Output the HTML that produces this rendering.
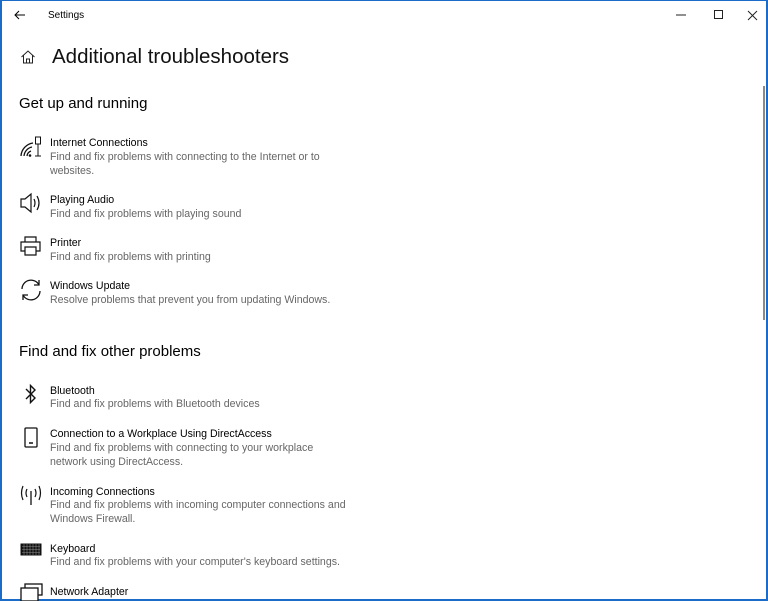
<!DOCTYPE html>
<html><head><style>
*{margin:0;padding:0;box-sizing:border-box}
body{width:768px;height:601px;overflow:hidden;background:#fff;font-family:"Liberation Sans",sans-serif;position:relative}
.frame{position:absolute;inset:0;border:2px solid #1b6cc8;border-top-width:1px}
.t{position:absolute;white-space:nowrap;color:#000}
.d{position:absolute;color:#666;font-size:10.6px;line-height:14px}
.h{font-size:10.6px}
svg{position:absolute}
</style></head><body>
<div class="frame"></div>
<svg style="left:14px;top:10px" width="12" height="10" viewBox="0 0 12 10"><path d="M11 5H1M5 1L1 5L5 9" stroke="#000" fill="none"/></svg>
<div class="t" style="left:48px;top:10px;font-size:10px">Settings</div>
<svg style="left:663px;top:9px" width="100" height="12"><path d="M13 6H23" stroke="#222"/><rect x="51.5" y="1.5" width="8" height="8" stroke="#222" fill="none"/><path d="M85 2L94 11M94 2L85 11" stroke="#222"/></svg>
<div style="position:absolute;left:763px;top:86px;width:2px;height:234px;background:#8a8a8a"></div>
<svg style="left:20px;top:49px" width="16" height="16" viewBox="0 0 16 16"><path d="M1.5 8L8 2L14.5 8M3.5 6.5V14H12.5V6.5M6.5 14V10H9.5V14" stroke="#222" fill="none"/></svg>
<div class="t" style="left:52px;top:45px;font-size:20.5px;color:#111">Additional troubleshooters</div>
<div class="t" style="left:19px;top:95px;font-size:15px">Get up and running</div>

<svg style="left:19px;top:136px" width="24" height="22" viewBox="0 0 24 22"><path d="M2 20A14 14 0 0 1 14 7M5 20A10 10 0 0 1 13 11M8 20A6 6 0 0 1 12 15" stroke="#111" fill="none" stroke-width="1.3"/><circle cx="11" cy="19.5" r="1.3" fill="#111"/><rect x="16.5" y="1" width="5" height="7" stroke="#111" fill="none"/><path d="M19 8V20M16 20H22" stroke="#111"/></svg>
<div class="t h" style="left:50px;top:137px">Internet Connections</div>
<div class="d" style="left:50px;top:150px">Find and fix problems with connecting to the Internet or to<br>websites.</div>

<svg style="left:19px;top:192px" width="24" height="22" viewBox="0 0 24 22"><path d="M2 7H6L12 2V20L6 15H2Z" stroke="#111" fill="none" stroke-width="1.2"/><path d="M15 7Q17 11 15 15M18 4Q22 11 18 18" stroke="#111" fill="none" stroke-width="1.2"/></svg>
<div class="t h" style="left:50px;top:194px">Playing Audio</div>
<div class="d" style="left:50px;top:207px">Find and fix problems with playing sound</div>

<svg style="left:19px;top:235px" width="24" height="22" viewBox="0 0 24 22"><path d="M6 7V2H17V7M6 16H2V7H21V16H17M6 12H17V20H6Z" stroke="#111" fill="none" stroke-width="1.2"/></svg>
<div class="t h" style="left:50px;top:237px">Printer</div>
<div class="d" style="left:50px;top:250px">Find and fix problems with printing</div>

<svg style="left:19px;top:278px" width="24" height="24" viewBox="0 0 24 24"><path d="M3 11A9 9 0 0 1 20 7M21 13A9 9 0 0 1 4 17" stroke="#111" fill="none" stroke-width="1.3"/><path d="M20 2V7H15M4 22V17H9" stroke="#111" fill="none" stroke-width="1.3"/></svg>
<div class="t h" style="left:50px;top:280px">Windows Update</div>
<div class="d" style="left:50px;top:293px">Resolve problems that prevent you from updating Windows.</div>

<div class="t" style="left:19px;top:343px;font-size:15px">Find and fix other problems</div>

<svg style="left:23px;top:383px" width="16" height="22" viewBox="0 0 16 22"><path d="M3 6L12 15L7.5 19.5V2.5L12 7L3 16" stroke="#111" fill="none" stroke-width="1.4"/></svg>
<div class="t h" style="left:50px;top:385px">Bluetooth</div>
<div class="d" style="left:50px;top:397px">Find and fix problems with Bluetooth devices</div>

<svg style="left:24px;top:427px" width="14" height="22" viewBox="0 0 14 22"><rect x="1" y="1" width="12" height="19" rx="1" stroke="#111" fill="none" stroke-width="1.3"/><path d="M5 16H9" stroke="#111" stroke-width="1.5"/></svg>
<div class="t h" style="left:50px;top:428px">Connection to a Workplace Using DirectAccess</div>
<div class="d" style="left:50px;top:441px">Find and fix problems with connecting to your workplace<br>network using DirectAccess.</div>

<svg style="left:19px;top:484px" width="24" height="22" viewBox="0 0 24 22"><path d="M12 7V21" stroke="#111" stroke-width="1.3"/><path d="M8 5Q6 9 8 13M16 5Q18 9 16 13M4 2Q1 9 4 16M20 2Q23 9 20 16" stroke="#111" fill="none" stroke-width="1.2"/></svg>
<div class="t h" style="left:50px;top:486px">Incoming Connections</div>
<div class="d" style="left:50px;top:498px">Find and fix problems with incoming computer connections and<br>Windows Firewall.</div>

<svg style="left:20px;top:543px" width="22" height="14" viewBox="0 0 22 14"><rect x="0.5" y="0.5" width="21" height="12" fill="#111"/><path d="M2 3.5H20M2 6.5H20M2 9.5H20M4 1V12M7 1V12M10 1V12M13 1V12M16 1V12M19 1V12" stroke="#888" stroke-width="0.6"/></svg>
<div class="t h" style="left:50px;top:543px">Keyboard</div>
<div class="d" style="left:50px;top:555px">Find and fix problems with your computer's keyboard settings.</div>

<svg style="left:20px;top:583px" width="24" height="18" viewBox="0 0 24 18"><rect x="5" y="1" width="17" height="11" stroke="#111" fill="none" stroke-width="1.3"/><rect x="1" y="5" width="17" height="13" stroke="#111" fill="#fff" stroke-width="1.3"/></svg>
<div class="t h" style="left:50px;top:586px">Network Adapter</div>
</body></html>
